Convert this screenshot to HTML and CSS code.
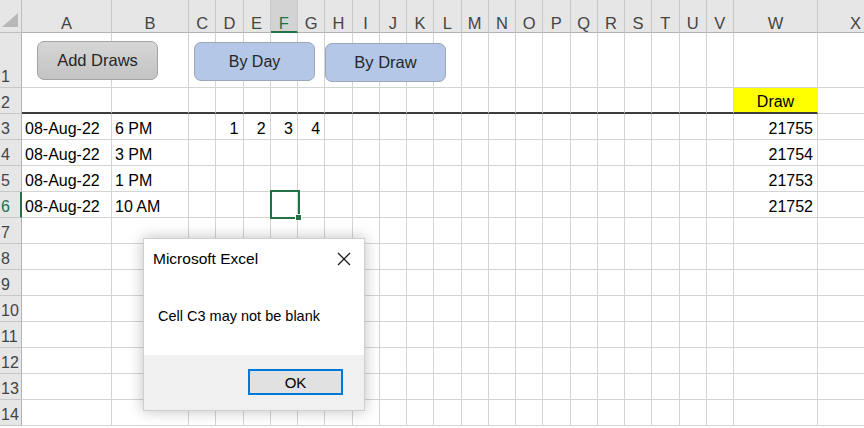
FILE: index.html
```html
<!DOCTYPE html>
<html lang="en">
<head>
    <meta charset="UTF-8">
    <meta name="viewport" content="width=device-width, initial-scale=1.0">
    <title>Draws - Excel</title>
    <link rel="stylesheet" href="styles.css">
</head>
<body>
    <div class="sheet" id="sheet">
        <!-- cells are filled in by the script below -->

        <!-- shapes floating over the sheet -->
        <button class="shape shape-gray add-btn">Add Draws</button>
        <button class="shape shape-blue day-btn">By Day</button>
        <button class="shape shape-blue draw-btn">By Draw</button>

        <div class="selection"><span class="fill-handle"></span></div>
    </div>

    <!-- Message box -->
    <div class="msgbox">
        <div class="msgbox-title">
            <span>Microsoft Excel</span>
            <svg class="msgbox-close" width="14" height="14" viewBox="0 0 14 14">
                <path d="M1 1 L13 13 M13 1 L1 13" stroke="#1a1a1a" stroke-width="1.3" fill="none"/>
            </svg>
        </div>
        <div class="msgbox-body">Cell C3 may not be blank</div>
        <div class="msgbox-footer">
            <button class="ok-btn">OK</button>
        </div>
    </div>

    <script>
        const columns = ['A', 'B', 'C', 'D', 'E', 'F', 'G', 'H', 'I', 'J', 'K', 'L',
                         'M', 'N', 'O', 'P', 'Q', 'R', 'S', 'T', 'U', 'V', 'W', 'X'];
        const rowCount = 14;
        const activeCol = 'F';
        const activeRow = 6;

        // cell values
        const data = {
            W2: 'Draw',
            A3: '08-Aug-22', B3: '6 PM', D3: 1, E3: 2, F3: 3, G3: 4, W3: 21755,
            A4: '08-Aug-22', B4: '3 PM', W4: 21754,
            A5: '08-Aug-22', B5: '1 PM', W5: 21753,
            A6: '08-Aug-22', B6: '10 AM', W6: 21752
        };

        function renderSheet() {
            const sheet = document.getElementById('sheet');
            let html = '<div class="corner"><svg width="16" height="14" viewBox="0 0 16 14"><polygon points="16,0 16,14 0,14" fill="#b8b8b8"/></svg></div>';

            columns.forEach(col => {
                html += `<div class="col-head${col === activeCol ? ' active' : ''}">${col}</div>`;
            });

            for (let r = 1; r <= rowCount; r++) {
                html += `<div class="row-head${r === activeRow ? ' active' : ''}">${r}</div>`;
                columns.forEach(col => {
                    const key = col + r;
                    const value = data[key];
                    let cls = 'cell';
                    if (typeof value === 'number') cls += ' num';
                    if (r === 2 && col !== 'X') cls += ' rule';
                    if (key === 'W2') cls += ' highlight';
                    html += `<div class="${cls}">${value !== undefined ? value : ''}</div>`;
                });
            }

            sheet.insertAdjacentHTML('afterbegin', html);
        }

        renderSheet();
    </script>
</body>
</html>
```

FILE: styles.css
```css
* {
    box-sizing: border-box;
}

body {
    margin: 0;
    width: 864px;
    height: 428px;
    overflow: hidden;
    background: #ffffff;
    font-family: "Liberation Sans", Arial, sans-serif;
    position: relative;
}

.sheet {
    position: relative;
    display: grid;
    grid-template-columns: 22px 90px 77px repeat(20, 27.25px) 84px 76px;
    grid-template-rows: 33px 55px repeat(13, 26px);
    font-size: 16px;
    color: #000;
}

/* headers */
.corner,
.col-head,
.row-head {
    background: #e6e6e6;
    color: #444;
}

.corner {
    border-right: 1px solid #bdbdbd;
    border-bottom: 1px solid #bdbdbd;
    display: flex;
    align-items: flex-end;
    justify-content: flex-end;
    padding: 0 3px 5px 0;
}

.col-head {
    display: flex;
    align-items: flex-end;
    justify-content: center;
    padding-bottom: 1px;
    line-height: 16px;
    font-size: 16.5px;
    border-right: 1px solid #c8c8c8;
    border-bottom: 1px solid #b3b3b3;
}

.col-head.active {
    background: #d3d3d3;
    color: #217346;
    border-bottom: 2px solid #217346;
    padding-bottom: 0;
}

.row-head {
    display: flex;
    align-items: flex-end;
    padding: 0 0 1px 1px;
    line-height: 18px;
    border-right: 1px solid #b3b3b3;
    border-bottom: 1px solid #c8c8c8;
}

.row-head.active {
    color: #217346;
    border-right: 2px solid #217346;
}

/* cells */
.cell {
    display: flex;
    align-items: flex-end;
    padding: 0 3px 1px;
    line-height: 18px;
    white-space: nowrap;
    border-right: 1px solid #d4d4d4;
    border-bottom: 1px solid #d4d4d4;
}

.cell.num {
    justify-content: flex-end;
    padding-right: 4px;
}

.cell.rule {
    border-bottom: 2px solid #3c3c3c;
}

.cell.highlight {
    background: #ffff00;
    justify-content: center;
    border-right-color: #ffff00;
}

/* floating shapes */
.shape {
    position: absolute;
    width: 121px;
    height: 39px;
    border-radius: 7px;
    font-family: "Liberation Sans", Arial, sans-serif;
    font-size: 16.5px;
    color: #262626;
    cursor: pointer;
}

.shape-gray {
    background: linear-gradient(#d6d6d6, #c3c3c3);
    border: 1px solid #a3a3a3;
}

.shape-blue {
    background: #b4c7e7;
    border: 1px solid #9ba6b8;
}

.add-btn {
    left: 37px;
    top: 41px;
}

.day-btn {
    left: 194px;
    top: 42px;
    font-size: 16px;
}

.draw-btn {
    left: 325px;
    top: 43px;
}

/* active cell */
.selection {
    position: absolute;
    left: 269.75px;
    top: 190px;
    width: 30px;
    height: 29px;
    border: 2px solid #217346;
}

.fill-handle {
    position: absolute;
    right: -4px;
    bottom: -4px;
    width: 7px;
    height: 7px;
    background: #217346;
    border: 1px solid #ffffff;
}

/* message box */
.msgbox {
    position: absolute;
    left: 143px;
    top: 238px;
    width: 222px;
    height: 173px;
    background: #ffffff;
    border: 1px solid #cfcfcf;
    box-shadow: 0 0 14px rgba(0, 0, 0, 0.25);
    display: flex;
    flex-direction: column;
}

.msgbox-title {
    display: flex;
    align-items: center;
    justify-content: space-between;
    height: 38px;
    padding: 1px 13px 0 9px;
    font-size: 15.5px;
    color: #000;
}

.msgbox-body {
    flex: 1;
    padding: 31px 0 0 14px;
    font-size: 14.5px;
    color: #000;
}

.msgbox-footer {
    height: 55px;
    background: #f0f0f0;
    display: flex;
    justify-content: flex-end;
    padding: 14px 21px 0 0;
}

.ok-btn {
    width: 95px;
    height: 26px;
    background: #e1e1e1;
    border: 2px solid #0078d7;
    font-family: "Liberation Sans", Arial, sans-serif;
    font-size: 15px;
    color: #000;
    padding: 0;
}
```
